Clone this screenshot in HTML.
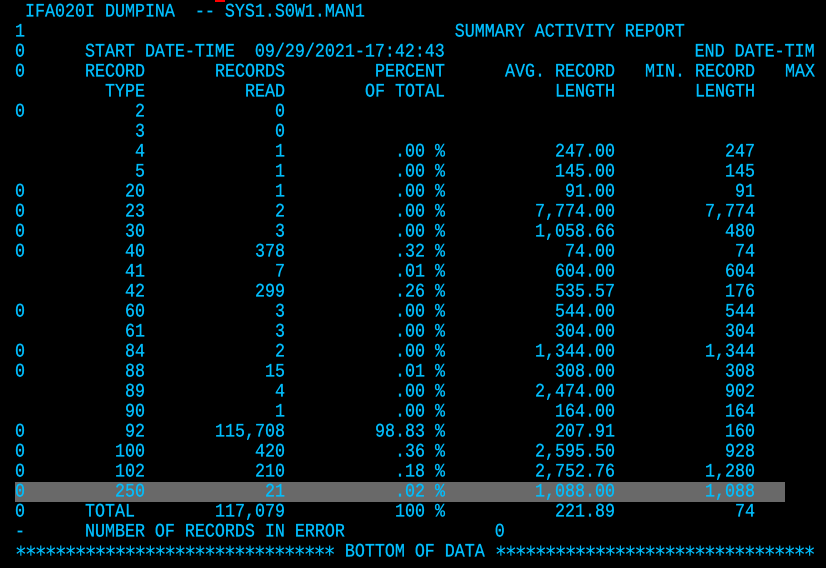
<!DOCTYPE html>
<html><head><meta charset="utf-8">
<style>
html,body{margin:0;padding:0;background:#000;}
body{width:826px;height:566px;overflow:hidden;position:relative;font-family:"Liberation Mono",monospace;}
.r{position:absolute;left:15px;width:810px;height:20px;line-height:20px;font-size:16.667px;color:#00bfff;white-space:pre;transform:scale(1,1.14);transform-origin:0 50%;text-rendering:geometricPrecision;-webkit-text-stroke:.25px #00bfff;}
.r span{position:absolute;top:0;text-align:right;left:0;}
.a{width:130px}.b{width:270px}.c{width:430px}.d{width:600px}.e{width:740px}
.r span.s{font-family:"DejaVu Sans Mono",monospace;font-size:19.5px;text-align:left;letter-spacing:-1.78px;width:330px;top:2px;-webkit-text-stroke:.1px #00bfff;}
#hl{position:absolute;left:15px;top:482px;width:770px;height:20px;background:#696969;}
#red{position:absolute;left:215px;top:0;width:10px;height:2px;background:#f00;}
</style></head><body>
<div id="hl"></div><div id="red"></div>
<div class="r" style="top:3px"> IFA020I DUMPINA  -- SYS1.S0W1.MAN1</div>
<div class="r" style="top:23px">1                                           SUMMARY ACTIVITY REPORT</div>
<div class="r" style="top:43px">0      START DATE-TIME  09/29/2021-17:42:43                         END DATE-TIM</div>
<div class="r" style="top:63px">0      RECORD<span class="b">RECORDS</span><span class="c">PERCENT</span><span class="d">AVG. RECORD</span><span class="e">MIN. RECORD</span><span style="left:770px">MAX</span></div>
<div class="r" style="top:83px"><span class="a">TYPE</span><span class="b">READ</span><span class="c">OF TOTAL</span><span class="d">LENGTH</span><span class="e">LENGTH</span></div>
<div class="r" style="top:103px">0<span class="a">2</span><span class="b">0</span></div>
<div class="r" style="top:123px"><span class="a">3</span><span class="b">0</span></div>
<div class="r" style="top:143px"><span class="a">4</span><span class="b">1</span><span class="c">.00 %</span><span class="d">247.00</span><span class="e">247</span></div>
<div class="r" style="top:163px"><span class="a">5</span><span class="b">1</span><span class="c">.00 %</span><span class="d">145.00</span><span class="e">145</span></div>
<div class="r" style="top:183px">0<span class="a">20</span><span class="b">1</span><span class="c">.00 %</span><span class="d">91.00</span><span class="e">91</span></div>
<div class="r" style="top:203px">0<span class="a">23</span><span class="b">2</span><span class="c">.00 %</span><span class="d">7,774.00</span><span class="e">7,774</span></div>
<div class="r" style="top:223px">0<span class="a">30</span><span class="b">3</span><span class="c">.00 %</span><span class="d">1,058.66</span><span class="e">480</span></div>
<div class="r" style="top:243px">0<span class="a">40</span><span class="b">378</span><span class="c">.32 %</span><span class="d">74.00</span><span class="e">74</span></div>
<div class="r" style="top:263px"><span class="a">41</span><span class="b">7</span><span class="c">.01 %</span><span class="d">604.00</span><span class="e">604</span></div>
<div class="r" style="top:283px"><span class="a">42</span><span class="b">299</span><span class="c">.26 %</span><span class="d">535.57</span><span class="e">176</span></div>
<div class="r" style="top:303px">0<span class="a">60</span><span class="b">3</span><span class="c">.00 %</span><span class="d">544.00</span><span class="e">544</span></div>
<div class="r" style="top:323px"><span class="a">61</span><span class="b">3</span><span class="c">.00 %</span><span class="d">304.00</span><span class="e">304</span></div>
<div class="r" style="top:343px">0<span class="a">84</span><span class="b">2</span><span class="c">.00 %</span><span class="d">1,344.00</span><span class="e">1,344</span></div>
<div class="r" style="top:363px">0<span class="a">88</span><span class="b">15</span><span class="c">.01 %</span><span class="d">308.00</span><span class="e">308</span></div>
<div class="r" style="top:383px"><span class="a">89</span><span class="b">4</span><span class="c">.00 %</span><span class="d">2,474.00</span><span class="e">902</span></div>
<div class="r" style="top:403px"><span class="a">90</span><span class="b">1</span><span class="c">.00 %</span><span class="d">164.00</span><span class="e">164</span></div>
<div class="r" style="top:423px">0<span class="a">92</span><span class="b">115,708</span><span class="c">98.83 %</span><span class="d">207.91</span><span class="e">160</span></div>
<div class="r" style="top:443px">0<span class="a">100</span><span class="b">420</span><span class="c">.36 %</span><span class="d">2,595.50</span><span class="e">928</span></div>
<div class="r" style="top:463px">0<span class="a">102</span><span class="b">210</span><span class="c">.18 %</span><span class="d">2,752.76</span><span class="e">1,280</span></div>
<div class="r" style="top:483px">0<span class="a">250</span><span class="b">21</span><span class="c">.02 %</span><span class="d">1,088.00</span><span class="e">1,088</span></div>
<div class="r" style="top:503px">0      TOTAL<span class="b">117,079</span><span class="c">100 %</span><span class="d">221.89</span><span class="e">74</span></div>
<div class="r" style="top:523px">-      NUMBER OF RECORDS IN ERROR               0</div>
<div class="r" style="top:543px"><span class="s">********************************</span>                                 BOTTOM OF DATA<span class="s" style="left:480px">********************************</span></div>
</body></html>
